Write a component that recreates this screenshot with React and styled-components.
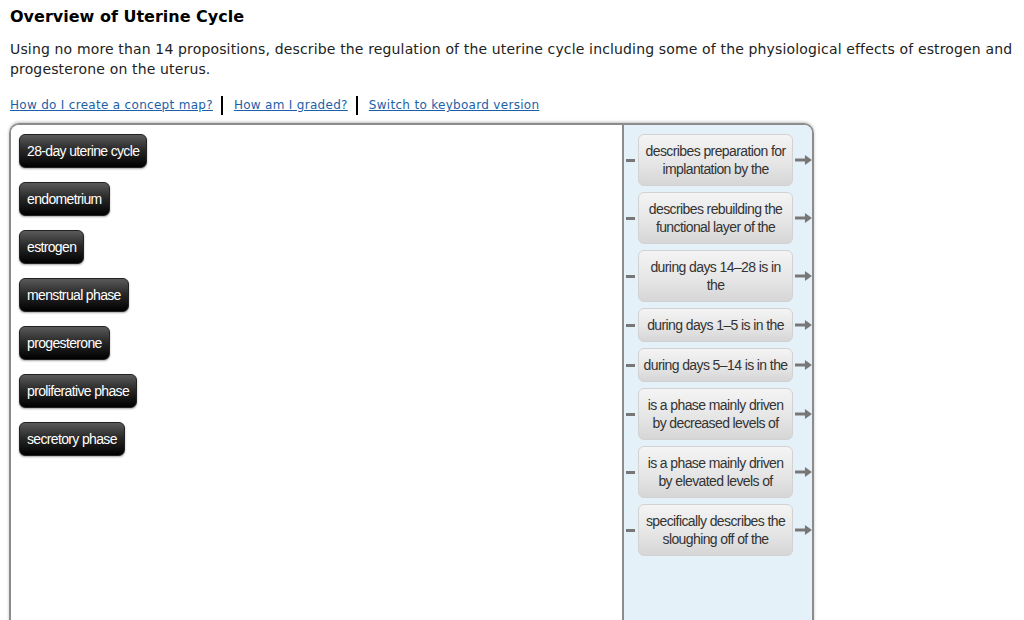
import styled, { createGlobalStyle } from "styled-components";

const concepts = [
  "28-day uterine cycle",
  "endometrium",
  "estrogen",
  "menstrual phase",
  "progesterone",
  "proliferative phase",
  "secretory phase",
];

const links = [
  "describes preparation for implantation by the",
  "describes rebuilding the functional layer of the",
  "during days 14–28 is in the",
  "during days 1–5 is in the",
  "during days 5–14 is in the",
  "is a phase mainly driven by decreased levels of",
  "is a phase mainly driven by elevated levels of",
  "specifically describes the sloughing off of the",
];

const GlobalStyle = createGlobalStyle`
  html, body {
    margin: 0;
    padding: 0;
    overflow: hidden;
    background: #fff;
  }
`;

const Page = styled.div`
  padding: 7px 10px 0 10px;
  font-family: "DejaVu Sans", Verdana, sans-serif;
  color: #222;
`;

const Title = styled.h1`
  margin: 0;
  font-size: 16px;
  line-height: 20px;
  font-weight: bold;
  color: #000;
`;

const Prompt = styled.p`
  margin: 12px 0 0 0;
  font-size: 14px;
  line-height: 20px;
  letter-spacing: 0.15px;
  color: #222;
`;

const LinkBar = styled.div`
  display: flex;
  align-items: center;
  margin-top: 16px;
  height: 20px;
`;

const HelpLink = styled.a`
  font-size: 12px;
  letter-spacing: 0.3px;
  color: #1c5fa8;
  text-decoration: underline;
  cursor: pointer;
`;

const Divider = styled.span`
  width: 2px;
  height: 19px;
  background: #000;
  margin: 0 11px 0 8px;
`;

const Board = styled.div`
  display: flex;
  margin: 8px 0 0 -1px;
  width: 801px;
  height: 520px;
  border: 2px solid #8c8c8c;
  border-bottom: none;
  border-radius: 10px 10px 0 0;
  box-shadow: 0 -1px 3px rgba(0, 0, 0, 0.25);
  overflow: hidden;
`;

const Canvas = styled.div`
  flex: 1;
  display: flex;
  flex-direction: column;
  align-items: flex-start;
  gap: 14px;
  padding: 9px 0 0 8px;
  background: #fff;
`;

const Concept = styled.div`
  height: 34px;
  box-sizing: border-box;
  display: flex;
  align-items: center;
  padding: 0 7px;
  border-radius: 6px;
  border: 1px solid #222;
  background: linear-gradient(to bottom, #5a5a5a 0%, #2a2a2a 45%, #000 100%);
  box-shadow: 0 1px 2px rgba(0, 0, 0, 0.35);
  color: #fff;
  font-family: "Liberation Sans", Arial, sans-serif;
  font-size: 14px;
  letter-spacing: -0.65px;
  white-space: nowrap;
`;

const Tray = styled.div`
  width: 188px;
  border-left: 2px solid #8c8c8c;
  background: #e5f1f8;
  display: flex;
  flex-direction: column;
  gap: 6px;
  padding-top: 9px;
`;

const LinkRow = styled.div`
  display: flex;
  align-items: center;
`;

const Stub = styled.span`
  width: 9px;
  height: 3px;
  background: #777;
  margin: 0 3px 0 2px;
`;

const Phrase = styled.div`
  width: 156px;
  box-sizing: border-box;
  min-height: 34px;
  padding: 7px 3px;
  border-radius: 6px;
  border: 1px solid #d2d2d2;
  background: linear-gradient(to bottom, #f4f4f4 0%, #e6e6e6 55%, #d6d6d6 100%);
  color: #333;
  text-align: center;
  font-family: "Liberation Sans", Arial, sans-serif;
  font-size: 14px;
  line-height: 18px;
  letter-spacing: -0.6px;
`;

const Arrow = () => (
  <svg width="17" height="10" viewBox="0 0 17 10" style={{ marginLeft: 2 }}>
    <rect x="0" y="3.5" width="11" height="3" fill="#777" />
    <polygon points="10,0 17,5 10,10" fill="#777" />
  </svg>
);

export default function App() {
  return (
    <>
      <GlobalStyle />
      <Page>
        <Title>Overview of Uterine Cycle</Title>
        <Prompt>
          Using no more than 14 propositions, describe the regulation of the uterine cycle
          including some of the physiological effects of estrogen and progesterone on the
          uterus.
        </Prompt>
        <LinkBar>
          <HelpLink>How do I create a concept map?</HelpLink>
          <Divider />
          <HelpLink>How am I graded?</HelpLink>
          <Divider />
          <HelpLink>Switch to keyboard version</HelpLink>
        </LinkBar>
        <Board>
          <Canvas>
            {concepts.map((c) => (
              <Concept key={c}>{c}</Concept>
            ))}
          </Canvas>
          <Tray>
            {links.map((l) => (
              <LinkRow key={l}>
                <Stub />
                <Phrase>{l}</Phrase>
                <Arrow />
              </LinkRow>
            ))}
          </Tray>
        </Board>
      </Page>
    </>
  );
}
